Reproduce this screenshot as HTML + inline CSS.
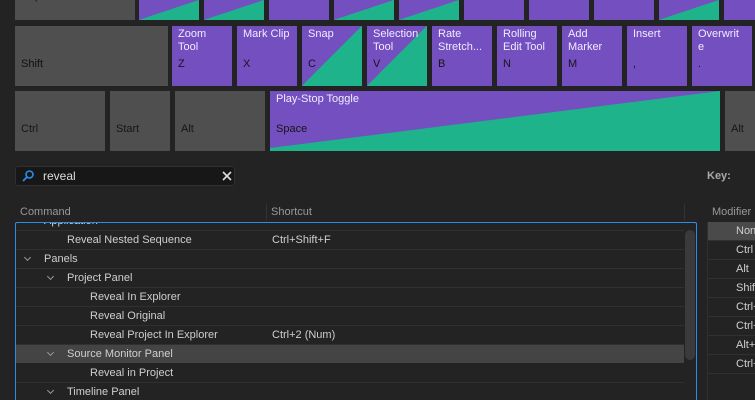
<!DOCTYPE html>
<html><head><meta charset="utf-8"><style>
*{margin:0;padding:0;box-sizing:border-box}
html,body{width:755px;height:400px;overflow:hidden}
body{background:#232323;position:relative;font-family:"Liberation Sans",Arial,sans-serif;font-size:11px}
.k{position:absolute;background:#744fc0;color:#f0ecff}
.g{background:#4f4f4f;color:#111}
.d{background:linear-gradient(to bottom right,#744fc0 50%,#1fb38b 50%)}
.k .t{position:absolute;left:6px;top:2px;line-height:13px}
.k .l{position:absolute;left:6px;top:32px;color:#161616}
.a{position:absolute;white-space:nowrap}
.clip{position:absolute;left:16px;top:223px;width:680px;height:177px;overflow:hidden}
.row{position:absolute;left:0;width:668px;height:19px;border-bottom:1px solid #303030;color:#cfcfcf;line-height:18px}
.row span{position:absolute}
.chev{position:absolute;width:5px;height:5px;border-right:1px solid #999;border-bottom:1px solid #999;transform:rotate(45deg)}
.m{position:absolute;left:708px;width:47px;height:19px;border-bottom:1px solid #303030;color:#cfcfcf;line-height:18px;padding-left:28px}
</style></head><body>
<div class="k g" style="left:15px;top:0;width:120px;height:20px"><div class="a" style="left:6px;top:-10px">Caps Lock</div></div>
<div class="k d" style="left:139px;top:0;width:60px;height:20px"></div>
<div class="k d" style="left:204px;top:0;width:60px;height:20px"></div>
<div class="k" style="left:269px;top:0;width:60px;height:20px"></div>
<div class="k d" style="left:334px;top:0;width:60px;height:20px"></div>
<div class="k d" style="left:399px;top:0;width:60px;height:20px"></div>
<div class="k" style="left:464px;top:0;width:60px;height:20px"></div>
<div class="k" style="left:529px;top:0;width:60px;height:20px"></div>
<div class="k" style="left:594px;top:0;width:60px;height:20px"></div>
<div class="k d" style="left:659px;top:0;width:60px;height:20px"></div>
<div class="k" style="left:724px;top:0;width:40px;height:20px"></div>
<div class="k g" style="left:15px;top:26px;width:153px;height:60px"><div class="l" style="color:#111">Shift</div></div>
<div class="k" style="left:172px;top:26px;width:60px;height:60px"><div class="t">Zoom<br>Tool</div><div class="l">Z</div></div>
<div class="k" style="left:237px;top:26px;width:60px;height:60px"><div class="t">Mark Clip</div><div class="l">X</div></div>
<div class="k d" style="left:302px;top:26px;width:60px;height:60px"><div class="t">Snap</div><div class="l">C</div></div>
<div class="k d" style="left:367px;top:26px;width:60px;height:60px"><div class="t">Selection<br>Tool</div><div class="l">V</div></div>
<div class="k" style="left:432px;top:26px;width:60px;height:60px"><div class="t">Rate<br>Stretch...</div><div class="l">B</div></div>
<div class="k" style="left:497px;top:26px;width:60px;height:60px"><div class="t">Rolling<br>Edit Tool</div><div class="l">N</div></div>
<div class="k" style="left:562px;top:26px;width:60px;height:60px"><div class="t">Add<br>Marker</div><div class="l">M</div></div>
<div class="k" style="left:627px;top:26px;width:60px;height:60px"><div class="t">Insert</div><div class="l">,</div></div>
<div class="k" style="left:692px;top:26px;width:60px;height:60px"><div class="t">Overwrit<br>e</div><div class="l">.</div></div>
<div class="k g" style="left:15px;top:91px;width:90px;height:60px"><div class="l">Ctrl</div></div>
<div class="k g" style="left:110px;top:91px;width:60px;height:60px"><div class="l">Start</div></div>
<div class="k g" style="left:175px;top:91px;width:90px;height:60px"><div class="l">Alt</div></div>
<div class="k" style="left:270px;top:91px;width:450px;height:60px">
<svg width="450" height="60" style="position:absolute;left:0;top:0"><polygon points="0,57 450,0 450,60 0,60" fill="#1fb38b"/></svg>
<div class="t">Play-Stop Toggle</div><div class="l">Space</div></div>
<div class="k g" style="left:725px;top:91px;width:40px;height:60px"><div class="l">Alt</div></div>
<div class="a" style="left:15px;top:166px;width:220px;height:20px;background:#171717;border:1px solid #303030;border-radius:3px"></div>
<svg class="a" style="left:20px;top:168px" width="16" height="16"><circle cx="9.5" cy="6.5" r="3.5" fill="none" stroke="#2d8ceb" stroke-width="1.6"/><line x1="7" y1="9" x2="3" y2="13" stroke="#2d8ceb" stroke-width="1.8"/></svg>
<div class="a" style="left:43px;top:169px;color:#ddd;font-size:12px">reveal</div>
<svg class="a" style="left:222px;top:171px" width="10" height="10"><path d="M1,1L9,9M9,1L1,9" stroke="#ddd" stroke-width="1.6"/></svg>
<div class="a" style="left:707px;top:170px;color:#aaa;font-weight:bold">Key:</div>
<div class="a" style="left:20px;top:206px;color:#999">Command</div>
<div class="a" style="left:266px;top:204px;width:1px;height:16px;background:#333"></div>
<div class="a" style="left:271px;top:206px;color:#999">Shortcut</div>
<div class="a" style="left:684px;top:204px;width:1px;height:16px;background:#333"></div>
<div class="a" style="left:712px;top:206px;color:#999">Modifier</div>
<div class="a" style="left:15px;top:222px;width:682px;height:190px;border:1px solid #2d8ceb;border-radius:2px"></div>
<div class="clip">
<div class="row" style="top:-11px"><span style="left:28px;">Application</span></div>
<div class="row" style="top:8px"><span style="left:51px">Reveal Nested Sequence</span><span style="left:256px">Ctrl+Shift+F</span></div>
<div class="row" style="top:27px"><i class="chev" style="left:9px;top:5px"></i><span style="left:28px">Panels</span></div>
<div class="row" style="top:46px"><i class="chev" style="left:32px;top:5px"></i><span style="left:51px">Project Panel</span></div>
<div class="row" style="top:65px"><span style="left:74px">Reveal In Explorer</span></div>
<div class="row" style="top:84px"><span style="left:74px">Reveal Original</span></div>
<div class="row" style="top:103px"><span style="left:74px">Reveal Project In Explorer</span><span style="left:256px">Ctrl+2 (Num)</span></div>
<div class="row" style="top:122px;background:#444;border:none;height:18px"><i class="chev" style="left:32px;top:5px"></i><span style="left:51px">Source Monitor Panel</span></div>
<div class="row" style="top:141px"><span style="left:74px">Reveal in Project</span></div>
<div class="row" style="top:160px"><i class="chev" style="left:32px;top:5px"></i><span style="left:51px">Timeline Panel</span></div>
</div>
<div class="a" style="left:685px;top:230px;width:10px;height:130px;background:#3a3a3a;border-radius:5px"></div>
<div class="a" style="left:707px;top:222px;width:1px;height:178px;background:#303030"></div>
<div class="m" style="top:222px;background:#4a4a4a">None</div>
<div class="m" style="top:241px">Ctrl</div>
<div class="m" style="top:260px">Alt</div>
<div class="m" style="top:279px">Shift</div>
<div class="m" style="top:298px">Ctrl+</div>
<div class="m" style="top:317px">Ctrl+</div>
<div class="m" style="top:336px">Alt+</div>
<div class="m" style="top:355px">Ctrl+</div>
</body></html>
